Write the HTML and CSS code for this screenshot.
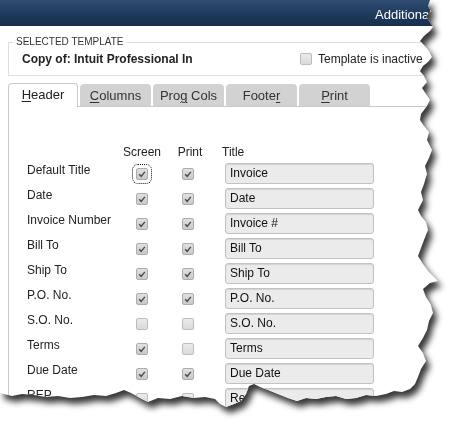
FILE: index.html
```html
<!DOCTYPE html>
<html>
<head>
<meta charset="utf-8">
<link rel="stylesheet" href="styles.css">
</head>
<body>
<div class="sheet">
  <div class="paper">
    <div class="titlebar"><span class="title">Additional Customization</span></div>
    <div class="content">
      <fieldset class="template">
        <legend>SELECTED TEMPLATE</legend>
        <div class="template-row">
          <span class="template-name">Copy of: Intuit Professional In</span>
          <label class="inactive"><span class="cb"></span><span>Template is inactive</span></label>
        </div>
      </fieldset>
      <div class="tabs">
        <div class="tab active"><span><u>H</u>eader</span></div>
        <div class="tab"><span><u>C</u>olumns</span></div>
        <div class="tab"><span>Pro<u>g</u> Cols</span></div>
        <div class="tab"><span>Foote<u>r</u></span></div>
        <div class="tab"><span><u>P</u>rint</span></div>
      </div>
      <div class="panel">
        <div class="grid">
          <div class="hd"></div><div class="hd c">Screen</div><div class="hd c pr">Print</div><div class="hd t">Title</div>

          <div class="lbl">Default Title</div>
          <div class="cell"><span class="cb on focus"><svg viewBox="0 0 12 12"><path d="M2.6 6.4 L5 8.8 L9.4 3.4"/></svg></span></div>
          <div class="cell"><span class="cb on"><svg viewBox="0 0 12 12"><path d="M2.6 6.4 L5 8.8 L9.4 3.4"/></svg></span></div>
          <div class="inp">Invoice</div>

          <div class="lbl">Date</div>
          <div class="cell"><span class="cb on"><svg viewBox="0 0 12 12"><path d="M2.6 6.4 L5 8.8 L9.4 3.4"/></svg></span></div>
          <div class="cell"><span class="cb on"><svg viewBox="0 0 12 12"><path d="M2.6 6.4 L5 8.8 L9.4 3.4"/></svg></span></div>
          <div class="inp">Date</div>

          <div class="lbl">Invoice Number</div>
          <div class="cell"><span class="cb on"><svg viewBox="0 0 12 12"><path d="M2.6 6.4 L5 8.8 L9.4 3.4"/></svg></span></div>
          <div class="cell"><span class="cb on"><svg viewBox="0 0 12 12"><path d="M2.6 6.4 L5 8.8 L9.4 3.4"/></svg></span></div>
          <div class="inp">Invoice #</div>

          <div class="lbl">Bill To</div>
          <div class="cell"><span class="cb on"><svg viewBox="0 0 12 12"><path d="M2.6 6.4 L5 8.8 L9.4 3.4"/></svg></span></div>
          <div class="cell"><span class="cb on"><svg viewBox="0 0 12 12"><path d="M2.6 6.4 L5 8.8 L9.4 3.4"/></svg></span></div>
          <div class="inp">Bill To</div>

          <div class="lbl">Ship To</div>
          <div class="cell"><span class="cb on"><svg viewBox="0 0 12 12"><path d="M2.6 6.4 L5 8.8 L9.4 3.4"/></svg></span></div>
          <div class="cell"><span class="cb on"><svg viewBox="0 0 12 12"><path d="M2.6 6.4 L5 8.8 L9.4 3.4"/></svg></span></div>
          <div class="inp">Ship To</div>

          <div class="lbl">P.O. No.</div>
          <div class="cell"><span class="cb on"><svg viewBox="0 0 12 12"><path d="M2.6 6.4 L5 8.8 L9.4 3.4"/></svg></span></div>
          <div class="cell"><span class="cb on"><svg viewBox="0 0 12 12"><path d="M2.6 6.4 L5 8.8 L9.4 3.4"/></svg></span></div>
          <div class="inp">P.O. No.</div>

          <div class="lbl">S.O. No.</div>
          <div class="cell"><span class="cb"></span></div>
          <div class="cell"><span class="cb"></span></div>
          <div class="inp">S.O. No.</div>

          <div class="lbl">Terms</div>
          <div class="cell"><span class="cb on"><svg viewBox="0 0 12 12"><path d="M2.6 6.4 L5 8.8 L9.4 3.4"/></svg></span></div>
          <div class="cell"><span class="cb"></span></div>
          <div class="inp">Terms</div>

          <div class="lbl">Due Date</div>
          <div class="cell"><span class="cb on"><svg viewBox="0 0 12 12"><path d="M2.6 6.4 L5 8.8 L9.4 3.4"/></svg></span></div>
          <div class="cell"><span class="cb on"><svg viewBox="0 0 12 12"><path d="M2.6 6.4 L5 8.8 L9.4 3.4"/></svg></span></div>
          <div class="inp">Due Date</div>

          <div class="lbl">REP</div>
          <div class="cell"><span class="cb"></span></div>
          <div class="cell"><span class="cb"></span></div>
          <div class="inp">Rep</div>
        </div>
      </div>
    </div>
  </div>
</div>
</body>
</html>
```

FILE: styles.css
```css
html, body {
  margin: 0;
  padding: 0;
  background: #ffffff;
}
body {
  font-family: "Liberation Sans", Arial, sans-serif;
  color: #222;
  font-size: 12px;
  width: 465px;
  height: 430px;
  overflow: hidden;
}
.sheet {
  width: 445px;
  height: 420px;
  filter: drop-shadow(4px 6px 3px rgba(0, 0, 0, 0.78));
}
.paper {
  width: 445px;
  height: 415px;
  background: #ffffff;
  overflow: hidden;
  clip-path: polygon(0 0, 430px 0, 428px 6px, 431px 11px, 426px 16px, 429px 21px, 433px 27px, 430px 31px, 424px 36px, 420px 41px, 425px 46px, 429px 51px, 432px 57px, 428px 62px, 423px 66px, 420px 71px, 424px 76px, 427px 82px, 422px 88px, 426px 94px, 430px 100px, 427px 106px, 421px 114px, 420px 120px, 424px 126px, 429px 132px, 427px 140px, 432px 150px, 429px 158px, 425px 166px, 427px 174px, 424px 184px, 421px 192px, 423px 200px, 418px 210px, 421px 216px, 426px 222px, 428px 230px, 424px 240px, 421px 248px, 418px 256px, 423px 264px, 429px 272px, 438px 281px, 430px 283px, 423px 289px, 426px 297px, 431px 305px, 433px 313px, 429px 321px, 427px 330px, 423px 338px, 418px 346px, 423px 353px, 426px 361px, 421px 369px, 418px 377px, 415px 384px, 410px 389px, 402px 392px, 394px 391px, 386px 394px, 376px 396px, 366px 395px, 356px 398px, 346px 399px, 336px 396px, 326px 397px, 316px 399px, 306px 398px, 297px 401px, 288px 398px, 278px 394px, 268px 390px, 260px 387px, 254px 384px, 249px 386px, 246px 394px, 241px 401px, 234px 404px, 226px 407px, 220px 404px, 215px 399px, 205px 397px, 194px 398px, 182px 396px, 170px 399px, 158px 398px, 148px 402px, 140px 398px, 131px 393px, 124px 390px, 116px 393px, 106px 396px, 94px 395px, 82px 397px, 70px 398px, 58px 396px, 46px 397px, 34px 395px, 22px 394px, 12px 396px, 0 393px);
}
.titlebar {
  height: 26px;
  background: linear-gradient(to bottom, #2f4e72 0%, #1e3a5d 55%, #172f4e 100%);
  display: flex;
  align-items: center;
}
.title {
  margin-left: 375px;
  color: #ffffff;
  font-size: 13px;
  white-space: nowrap;
  padding-top: 2px;
}
.content {
  padding-left: 8px;
}
.template {
  margin: 10px 0 0 0;
  padding: 0 0 0 4px;
  border: 1px solid #dedede;
  min-width: 0;
}
.template legend {
  font-size: 10px;
  line-height: 12px;
  padding: 0 3px;
  color: #333;
}
.template-row {
  height: 22px;
  padding: 0 0 5px 9px;
  display: flex;
  align-items: center;
  white-space: nowrap;
}
.template-name {
  font-weight: bold;
  color: #222;
  width: 278px;
  flex: none;
}
.inactive {
  display: flex;
  align-items: center;
  gap: 6px;
  color: #222;
}
.tabs {
  margin-top: 7px;
  display: flex;
  align-items: flex-end;
  gap: 2px;
  border-bottom: 1px solid #c9c9c9;
  width: 440px;
}
.tab {
  width: 71px;
  height: 22px;
  box-sizing: border-box;
  background: #d2d2d2;
  border-radius: 4px 4px 0 0;
  font-size: 13px;
  color: #333;
  display: flex;
  align-items: center;
  justify-content: center;
  padding-top: 1px;
  white-space: nowrap;
}
.tab.active {
  width: 70px;
  height: 24px;
  margin-bottom: -1px;
  background: #ffffff;
  border: 1px solid #c9c9c9;
  border-bottom: none;
  color: #222;
  padding-top: 0;
  padding-bottom: 2px;
}
.tab u {
  text-decoration-thickness: 1px;
  text-underline-offset: 2px;
}
.panel {
  border-left: 1px solid #c9c9c9;
  height: 330px;
}
.grid {
  padding: 38px 0 0 18px;
  display: grid;
  grid-template-columns: 93px 44px 48px 160px;
  grid-auto-rows: 21px;
  grid-template-rows: 14px;
  row-gap: 4px;
}
.hd {
  line-height: 14px;
  color: #222;
}
.hd.c {
  text-align: center;
}
.hd.pr {
  padding-left: 4px;
}
.hd.t {
  padding-left: 10px;
}
.lbl {
  line-height: 14px;
  color: #222;
  white-space: nowrap;
}
.cell {
  display: flex;
  align-items: center;
  justify-content: center;
}
.cb {
  width: 12px;
  height: 12px;
  box-sizing: border-box;
  border: 1px solid #bdbdbd;
  border-radius: 2px;
  background: linear-gradient(to bottom, #ebebeb, #dadada);
  display: inline-block;
  flex: none;
}
.cb.on {
  border-color: #acacac;
  background: linear-gradient(to bottom, #e0e0e0, #c9c9c9);
}
.cb svg {
  display: block;
  width: 10px;
  height: 10px;
}
.cb svg path {
  fill: none;
  stroke: #4a4a4a;
  stroke-width: 1.7;
}
.cb.focus {
  outline: 1px dotted #111;
  outline-offset: 3px;
}
.inp {
  margin-left: 13px;
  width: 149px;
  box-sizing: border-box;
  height: 21px;
  border: 1px solid #c2c2c2;
  border-radius: 3px;
  background: #ebebeb;
  box-shadow: inset 0 1px 1px rgba(0, 0, 0, 0.1);
  padding-left: 4px;
  line-height: 19px;
  color: #111;
  white-space: nowrap;
}
```
